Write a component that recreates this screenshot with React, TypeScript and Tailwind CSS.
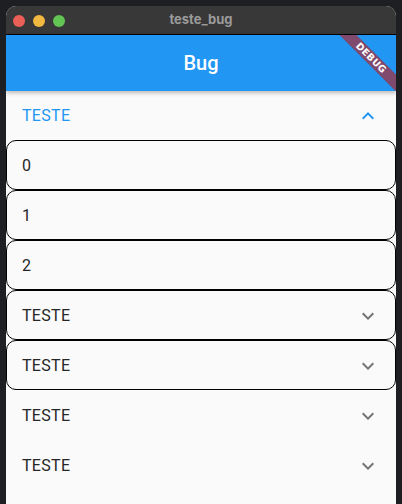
const cardRows = ['0', '1', '2', 'TESTE', 'TESTE']
const plainRows = ['TESTE', 'TESTE']

function ExpandMore({ className }: { className?: string }) {
  return (
    <svg viewBox="0 0 24 24" className={className} fill="currentColor">
      <path d="M16.59 8.59L12 13.17 7.41 8.59 6 10l6 6 6-6z" />
    </svg>
  )
}

function ExpandLess({ className }: { className?: string }) {
  return (
    <svg viewBox="0 0 24 24" className={className} fill="currentColor">
      <path d="M12 8l-6 6 1.41 1.41L12 10.83l4.59 4.58L18 14z" />
    </svg>
  )
}

export default function App() {
  return (
    <div className="h-[504px] w-[402px] overflow-hidden bg-[#1e1f22] pt-[6px] pl-[6px]">
      <div className="flex h-[498px] w-[390px] flex-col overflow-hidden rounded-t-[10px] bg-[#fafafa]">
        {/* Title bar */}
        <div className="relative flex h-[29px] shrink-0 items-center justify-center border-b border-black bg-[#383838]">
          <div className="absolute left-[7px] top-[9px] flex gap-[8px]">
            <span className="h-[12px] w-[12px] rounded-full bg-[#ec5f57]" />
            <span className="h-[12px] w-[12px] rounded-full bg-[#f1b93f]" />
            <span className="h-[12px] w-[12px] rounded-full bg-[#62c554]" />
          </div>
          <span className="font-['Inter',sans-serif] text-[13px] font-bold text-[#9b9b9b]">teste_bug</span>
        </div>

        {/* App bar */}
        <div className="relative z-10 flex h-[56px] shrink-0 items-center justify-center bg-[#2196f3] shadow-[0_2px_4px_rgba(0,0,0,0.25)]">
          <span className="font-['Roboto',sans-serif] text-[20px] font-medium text-white">Bug</span>
          <div className="absolute right-0 top-0 h-[56px] w-[60px] overflow-hidden">
            <div className="absolute left-[-15px] top-[17px] flex h-[12px] w-[100px] rotate-45 items-center justify-center bg-[#b71c1ca0]">
              <span className="font-['DejaVu_Sans',sans-serif] text-[9.5px] font-black leading-none tracking-[0.3px] text-white">
                DEBUG
              </span>
            </div>
          </div>
        </div>

        {/* List */}
        <div className="flex flex-col font-['Roboto',sans-serif] text-[16px] tracking-[0.3px]">
          <div className="flex h-[49px] items-center justify-between pl-[16px] pr-[16px]">
            <span className="text-[#2196f3]">TESTE</span>
            <ExpandLess className="h-[24px] w-[24px] text-[#2196f3]" />
          </div>

          {cardRows.map((label, i) => (
            <div
              key={i}
              className="flex h-[50px] items-center justify-between rounded-[10px] border border-black pl-[15px] pr-[15px] pt-[2px] text-[#262626]"
            >
              <span>{label}</span>
              {label === 'TESTE' && <ExpandMore className="h-[24px] w-[24px] text-[#757575]" />}
            </div>
          ))}

          {plainRows.map((label, i) => (
            <div key={i} className="flex h-[50px] items-center justify-between pl-[16px] pr-[16px] pt-[2px] text-[#262626]">
              <span>{label}</span>
              <ExpandMore className="h-[24px] w-[24px] text-[#757575]" />
            </div>
          ))}
        </div>
      </div>
    </div>
  )
}
